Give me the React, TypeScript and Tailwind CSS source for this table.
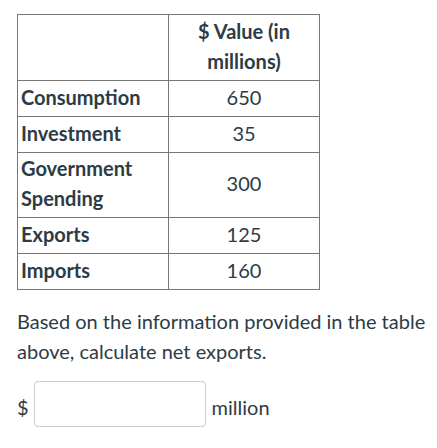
export default function App() {
  const rows: [string, string][] = [
    ["Consumption", "650"],
    ["Investment", "35"],
    ["Government Spending", "300"],
    ["Exports", "125"],
    ["Imports", "160"],
  ];
  return (
    <div
      className="bg-white w-[437px] h-[448px] pl-[17px] pt-[14px] text-[#2d3b45] text-[20px] leading-[30px]"
      style={{ fontFamily: "Lato, 'Noto Sans', sans-serif" }}
    >
      <table className="border-collapse w-[303px] table-fixed">
        <tbody>
          <tr>
            <td className="border border-[#777] w-[151px] h-[66px]"></td>
            <td className="border border-[#777] text-center font-bold px-[20px] pt-0 pb-[4px]">
              $ Value (in millions)
            </td>
          </tr>
          {rows.map(([k, v]) => (
            <tr key={k}>
              <td className="border border-[#777] font-bold px-[3px] pt-0 pb-[4px] h-[36px] pr-[20px]">{k}</td>
              <td className="border border-[#777] text-center pt-0 pb-[4px]">{v}</td>
            </tr>
          ))}
        </tbody>
      </table>
      <p className="mt-[16px] w-[420px]">
        Based on the information provided in the table above, calculate net exports.
      </p>
      <div className="flex items-center mt-[15px]">
        <span className="pt-[6px]">$</span>
        <div className="ml-[5px] w-[172px] h-[46px] border border-[#c7cdd1] rounded-[4px] bg-white"></div>
        <span className="ml-[6px] pt-[6px]">million</span>
      </div>
    </div>
  );
}
